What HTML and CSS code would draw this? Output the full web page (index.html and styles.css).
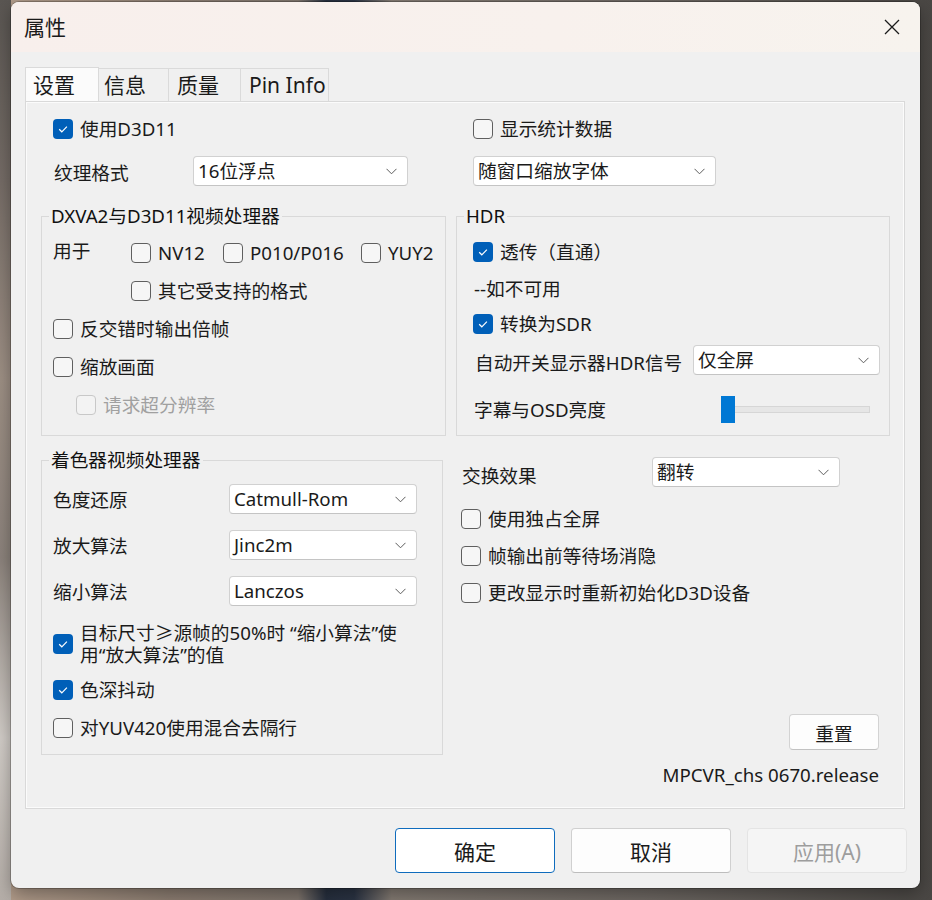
FILE: index.html
```html
<!DOCTYPE html>
<html lang="zh-CN">
<head>
<meta charset="utf-8">
<title>属性</title>
<link rel="stylesheet" href="styles.css">
</head>
<body>
<div class="window">
  <div class="titlebar">
    <span class="title">属性</span>
    <span class="close"><svg width="16" height="16" viewBox="0 0 16 16"><path d="M1 1L15 15M15 1L1 15" stroke="#1b1b1b" stroke-width="1.3" fill="none"/></svg></span>
  </div>
  <div class="client">
    <div class="tabs">
      <div class="tab tab-active">设置</div>
      <div class="tab">信息</div>
      <div class="tab tab-mid">质量</div>
      <div class="tab tab-latin">Pin Info</div>
    </div>
    <div class="panel">
      <div class="row row-first">
        <div class="cell-l1">
          <label class="check"><span class="box box-on"><svg width="20" height="20" viewBox="0 0 20 20"><path d="M6.2 10.3L8.8 12.8L13.9 7.6" stroke="#fff" stroke-width="1.2" fill="none"/></svg></span>使用D3D11</label>
        </div>
        <div class="cell-r1">
          <label class="check"><span class="box"></span>显示统计数据</label>
        </div>
      </div>

      <div class="row row-second">
        <div class="cell-l2">
          <span class="lbl lbl-tex">纹理格式</span>
          <div class="combo combo-tex"><span>16位浮点</span><svg class="chev" width="11" height="7" viewBox="0 0 11 7"><path d="M0.5 0.8L5.5 5.8L10.5 0.8" stroke="#5c5c5c" stroke-width="1" fill="none"/></svg></div>
        </div>
        <div class="cell-r2">
          <div class="combo combo-font"><span>随窗口缩放字体</span><svg class="chev" width="11" height="7" viewBox="0 0 11 7"><path d="M0.5 0.8L5.5 5.8L10.5 0.8" stroke="#5c5c5c" stroke-width="1" fill="none"/></svg></div>
        </div>
      </div>

      <div class="row row-groups">
        <fieldset class="group group-dxva">
          <legend>DXVA2与D3D11视频处理器</legend>
          <div class="group-body body-dxva">
            <div class="line">
              <span class="lbl lbl-use">用于</span>
              <div class="formats">
                <label class="check fmt-nv12"><span class="box"></span>NV12</label>
                <label class="check fmt-p010"><span class="box"></span>P010/P016</label>
                <label class="check"><span class="box"></span>YUY2</label>
              </div>
            </div>
            <div class="line line-indent">
              <label class="check"><span class="box"></span>其它受支持的格式</label>
            </div>
            <div class="line">
              <label class="check"><span class="box"></span>反交错时输出倍帧</label>
            </div>
            <div class="line">
              <label class="check"><span class="box"></span>缩放画面</label>
            </div>
            <div class="line line-sub">
              <label class="check check-disabled"><span class="box box-disabled"></span>请求超分辨率</label>
            </div>
          </div>
        </fieldset>

        <fieldset class="group group-hdr">
          <legend>HDR</legend>
          <div class="group-body body-hdr">
            <label class="check"><span class="box box-on"><svg width="20" height="20" viewBox="0 0 20 20"><path d="M6.2 10.3L8.8 12.8L13.9 7.6" stroke="#fff" stroke-width="1.2" fill="none"/></svg></span>透传（直通）</label>
            <div class="note">--如不可用</div>
            <label class="check hdr-sdr"><span class="box box-on"><svg width="20" height="20" viewBox="0 0 20 20"><path d="M6.2 10.3L8.8 12.8L13.9 7.6" stroke="#fff" stroke-width="1.2" fill="none"/></svg></span>转换为SDR</label>
            <div class="hdr-auto">
              <span class="lbl lbl-auto">自动开关显示器HDR信号</span>
              <div class="combo combo-hdr"><span>仅全屏</span><svg class="chev" width="11" height="7" viewBox="0 0 11 7"><path d="M0.5 0.8L5.5 5.8L10.5 0.8" stroke="#5c5c5c" stroke-width="1" fill="none"/></svg></div>
            </div>
            <div class="hdr-osd">
              <span class="lbl lbl-osd">字幕与OSD亮度</span>
              <div class="slider">
                <span class="thumb"></span>
                <span class="track"></span>
              </div>
            </div>
          </div>
        </fieldset>
      </div>

      <div class="row row-lower">
        <fieldset class="group group-shader">
          <legend>着色器视频处理器</legend>
          <div class="group-body body-shader">
            <div class="algo">
              <span class="lbl lbl-algo">色度还原</span>
              <div class="combo combo-algo"><span>Catmull-Rom</span><svg class="chev" width="11" height="7" viewBox="0 0 11 7"><path d="M0.5 0.8L5.5 5.8L10.5 0.8" stroke="#5c5c5c" stroke-width="1" fill="none"/></svg></div>
            </div>
            <div class="algo">
              <span class="lbl lbl-algo">放大算法</span>
              <div class="combo combo-algo"><span>Jinc2m</span><svg class="chev" width="11" height="7" viewBox="0 0 11 7"><path d="M0.5 0.8L5.5 5.8L10.5 0.8" stroke="#5c5c5c" stroke-width="1" fill="none"/></svg></div>
            </div>
            <div class="algo">
              <span class="lbl lbl-algo">缩小算法</span>
              <div class="combo combo-algo"><span>Lanczos</span><svg class="chev" width="11" height="7" viewBox="0 0 11 7"><path d="M0.5 0.8L5.5 5.8L10.5 0.8" stroke="#5c5c5c" stroke-width="1" fill="none"/></svg></div>
            </div>
            <label class="check check-multi"><span class="box box-on"><svg width="20" height="20" viewBox="0 0 20 20"><path d="M6.2 10.3L8.8 12.8L13.9 7.6" stroke="#fff" stroke-width="1.2" fill="none"/></svg></span><span class="multi-text"><span class="multi-line">目标尺寸≥源帧的50%时 “缩小算法”使</span><span class="multi-line">用“放大算法”的值</span></span></label>
            <label class="check check-dither"><span class="box box-on"><svg width="20" height="20" viewBox="0 0 20 20"><path d="M6.2 10.3L8.8 12.8L13.9 7.6" stroke="#fff" stroke-width="1.2" fill="none"/></svg></span>色深抖动</label>
            <label class="check check-yuv"><span class="box"></span>对YUV420使用混合去隔行</label>
          </div>
        </fieldset>

        <div class="lower-right">
          <div class="swap">
            <span class="lbl lbl-swap">交换效果</span>
            <div class="combo combo-swap"><span>翻转</span><svg class="chev" width="11" height="7" viewBox="0 0 11 7"><path d="M0.5 0.8L5.5 5.8L10.5 0.8" stroke="#5c5c5c" stroke-width="1" fill="none"/></svg></div>
          </div>
          <label class="check check-excl"><span class="box"></span>使用独占全屏</label>
          <label class="check check-next"><span class="box"></span>帧输出前等待场消隐</label>
          <label class="check check-next"><span class="box"></span>更改显示时重新初始化D3D设备</label>
          <div class="reset-wrap"><button class="btn-reset">重置</button></div>
          <div class="version">MPCVR_chs 0670.release</div>
        </div>
      </div>
    </div>

    <div class="footer">
      <button class="btn btn-primary">确定</button>
      <button class="btn">取消</button>
      <button class="btn btn-disabled">应用(A)</button>
    </div>
  </div>
</div>
</body>
</html>
```

FILE: styles.css
```css
* { box-sizing: border-box; }

html, body {
  margin: 0;
  padding: 0;
}

body {
  width: 932px;
  height: 900px;
  overflow: hidden;
  font-family: "Noto Sans", "Noto Sans CJK SC", sans-serif;
  font-size: 18.7px;
  color: #1a1a1a;
  background:
    linear-gradient(to bottom, #5a5652 0%, #756c66 20%, #9e9085 42%, #8c837c 62%, #d2cdc8 82%, #b5aea8 100%) left top / 11px 100% no-repeat,
    linear-gradient(to right, #b39d8b 0%, #8d7e72 18%, #7f756d 32%, #27303f 35%, #2b3444 38%, #847b73 42%, #6d6762 70%, #4a4744 100%);
}

.window {
  margin: 2px 0 0 11px;
  width: 909px;
  height: 886px;
  border-radius: 8px;
  overflow: hidden;
  background: #f0f0f0;
  display: flex;
  flex-direction: column;
  box-shadow: 0 0 0 1px rgba(0, 0, 0, 0.22), 0 6px 18px rgba(0, 0, 0, 0.35);
}

/* title bar */
.titlebar {
  flex: none;
  height: 50px;
  display: flex;
  align-items: center;
  justify-content: space-between;
  padding: 0 20px 0 13px;
  background: linear-gradient(to right, #f8efec, #f8f1ed 60%, #f7f3ee);
}

.title {
  font-size: 21px;
  line-height: 1;
  color: #1a1a1a;
}

.close {
  display: flex;
  width: 16px;
  height: 16px;
}

/* client */
.client {
  flex: 1;
  display: flex;
  flex-direction: column;
  padding: 15px 15px 15px 14px;
}

.tabs {
  display: flex;
  align-items: flex-end;
  height: 34px;
}

.tab {
  height: 33px;
  line-height: 32px;
  font-size: 21px;
  padding: 0 22px 0 5px;
  border: 1px solid #dadada;
  border-bottom: none;
  background: #f0f0f0;
  color: #1a1a1a;
  margin-left: -1px;
  white-space: nowrap;
}

.tab-active {
  height: 34px;
  line-height: 34px;
  padding: 0 23px 0 7px;
  background: #fbfbfb;
  margin-left: 0;
  position: relative;
  z-index: 1;
}

.tab-mid {
  padding: 0 21px 0 8px;
}

.tab-latin {
  padding: 0 2px 0 8px;
}

.panel {
  height: 708px;
  flex: none;
  border: 1px solid #d9d9d9;
  box-shadow: inset 0 0 0 1px #fbfbfb;
  padding: 14px 14px 0 15px;
  background: #f0f0f0;
}

.row {
  display: grid;
  grid-template-columns: 405px 434px;
  column-gap: 10px;
}

/* checkboxes */
.check {
  display: flex;
  align-items: center;
  gap: 7px;
  height: 26px;
  line-height: 26px;
  white-space: nowrap;
}

.box {
  flex: none;
  width: 20px;
  height: 20px;
  border: 1px solid #5f5f5f;
  border-radius: 4px;
  background: #f6f6f6;
  display: flex;
}

.box-on {
  border: none;
  background: #005fb8;
}

.box-disabled {
  border-color: #c8c8c8;
  background: #f3f3f3;
}

.check-disabled {
  color: #a0a0a0;
}

.lbl {
  line-height: 26px;
  white-space: nowrap;
}

/* combobox */
.combo {
  flex: none;
  height: 30px;
  display: flex;
  align-items: center;
  justify-content: space-between;
  padding: 0 10px 0 4px;
  background: #ffffff;
  border: 1px solid #d1d1d1;
  border-bottom-color: #c4c4c4;
  border-radius: 4px;
  line-height: 28px;
  white-space: nowrap;
}

.chev {
  flex: none;
}

/* row 1 */
.row-first {
  height: 26px;
}

.cell-l1 {
  padding-left: 12px;
}

.cell-r1 {
  padding-left: 17px;
}

/* row 2 */
.row-second {
  margin-top: 14px;
}

.cell-l2 {
  display: flex;
  align-items: flex-start;
  padding-left: 13px;
}

.lbl-tex {
  width: 139px;
  margin-top: 4px;
}

.combo-tex {
  width: 215px;
}

.cell-r2 {
  padding-left: 17px;
}

.combo-font {
  width: 243px;
}

/* group boxes */
.group {
  margin: 0;
  padding: 0;
  min-width: 0;
  border: 1px solid #d9d9d9;
}

.group legend {
  margin-left: 7px;
  padding: 0 2px;
  line-height: 26px;
  font-size: 18.7px;
  color: #111;
}

.row-groups {
  margin-top: 17px;
}

.group-dxva,
.group-hdr {
  height: 233px;
}

.body-dxva {
  padding: 11px 0 0 11px;
  display: flex;
  flex-direction: column;
  gap: 12px;
}

.line {
  display: flex;
  align-items: flex-start;
  height: 26px;
}

.lbl-use {
  width: 78px;
  margin-top: -2px;
}

.formats {
  display: flex;
}

.fmt-nv12 {
  width: 92px;
}

.fmt-p010 {
  width: 138px;
}

.line-indent {
  padding-left: 78px;
}

.line-sub {
  padding-left: 23px;
}

.body-hdr {
  padding: 10px 0 0 16px;
  display: flex;
  flex-direction: column;
}

.note {
  margin-top: 11px;
  line-height: 26px;
  padding-left: 1px;
}

.hdr-sdr {
  margin-top: 9px;
}

.hdr-auto {
  margin-top: 8px;
  display: flex;
  align-items: flex-start;
}

.lbl-auto {
  width: 220px;
  padding-left: 2px;
  margin-top: 5px;
}

.combo-hdr {
  width: 187px;
}

.hdr-osd {
  margin-top: 20px;
  display: flex;
  align-items: center;
  height: 27px;
}

.lbl-osd {
  width: 248px;
  padding-left: 1px;
  line-height: 27px;
}

.slider {
  display: flex;
  align-items: center;
  height: 27px;
}

.thumb {
  width: 14px;
  height: 27px;
  background: #0078d4;
}

.track {
  width: 135px;
  height: 7px;
  background: #e6e6e6;
  border: 1px solid #d6d6d6;
  border-left: none;
}

/* lower row */
.row-lower {
  margin-top: 11px;
  align-items: start;
}

.group-shader {
  width: 402px;
  height: 308px;
}

.body-shader {
  padding: 11px 0 0 11px;
  display: flex;
  flex-direction: column;
}

.algo {
  display: flex;
  align-items: center;
  height: 30px;
  margin-bottom: 16px;
}

.lbl-algo {
  width: 176px;
  line-height: 30px;
  padding-top: 2px;
}

.combo-algo {
  width: 188px;
}

.check-multi {
  height: auto;
  align-items: center;
}

.multi-text {
  display: flex;
  flex-direction: column;
}

.multi-line {
  display: block;
  height: 22px;
  line-height: 22px;
}

.check-dither {
  margin-top: 11px;
}

.check-yuv {
  margin-top: 12px;
}

.lower-right {
  padding: 10px 11px 0 5px;
  display: flex;
  flex-direction: column;
}

.swap {
  display: flex;
  align-items: flex-start;
}

.lbl-swap {
  width: 191px;
  padding-left: 1px;
  margin-top: 6px;
}

.combo-swap {
  width: 188px;
}

.check-excl {
  margin-top: 17px;
}

.check-next {
  margin-top: 11px;
}

.reset-wrap {
  display: flex;
  justify-content: flex-end;
  margin-top: 108px;
}

.btn-reset {
  width: 90px;
  height: 36px;
  font-family: inherit;
  font-size: 18.7px;
  color: #1a1a1a;
  background: #fdfdfd;
  border: 1px solid #d3d3d3;
  border-bottom-color: #c2c2c2;
  border-radius: 4px;
  padding: 0;
}

.version {
  margin-top: 12px;
  line-height: 26px;
  text-align: right;
  white-space: nowrap;
}

/* footer */
.footer {
  display: flex;
  justify-content: flex-end;
  gap: 16px;
  margin-top: 19px;
  margin-right: -2px;
}

.btn {
  width: 160px;
  height: 45px;
  font-family: inherit;
  font-size: 21px;
  color: #1a1a1a;
  background: #fdfdfd;
  border: 1px solid #d0d0d0;
  border-bottom-color: #bdbdbd;
  border-radius: 4px;
  padding: 0;
}

.btn-primary {
  background: #ffffff;
  border: 1px solid #0f6cbd;
  box-shadow: inset 0 0 0 1px #ffffff;
}

.btn-disabled {
  background: #f5f5f5;
  border-color: #e4e4e4;
  color: #9d9d9d;
}
```
